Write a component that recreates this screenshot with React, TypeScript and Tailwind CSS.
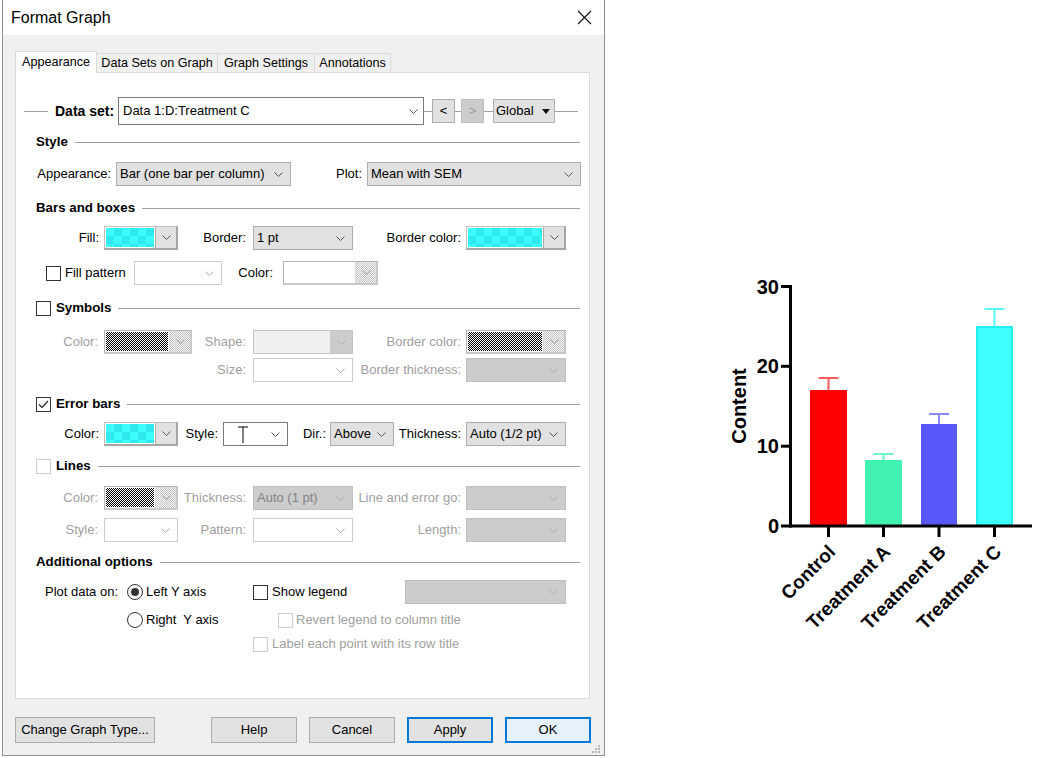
import { ReactNode } from "react";
import clsx from "clsx";

type Variant = "gray" | "white" | "offWhite" | "offGray";

const selectStyles: Record<Variant, string> = {
  gray: "bg-[#e1e1e1] border-[#adadad] text-black",
  white: "bg-white border-[#7a7a7a] text-black",
  offWhite: "bg-white border-[#cccccc] text-[#838383]",
  offGray: "bg-[#cccccc] border-[#bfbfbf] text-[#838383]",
};

const cyanChecker =
  "bg-[conic-gradient(#2ee9ee_25%,#3cfcfc_0_50%,#2ee9ee_0_75%,#3cfcfc_0)] bg-[length:16px_16px]";
const blackDither = "bg-[repeating-conic-gradient(#000_0_25%,#fff_0_50%)] bg-[length:2px_2px]";
const lightDither = "bg-[repeating-conic-gradient(#c4c4c4_0_25%,#f6f6f6_0_50%)] bg-[length:2px_2px]";

function Chevron({ light }: { light?: boolean }) {
  return (
    <svg width="9" height="5" viewBox="0 0 9 5" className="shrink-0">
      <polyline points="0.5,0.5 4.5,4.5 8.5,0.5" fill="none" stroke={light ? "#adadad" : "#555555"} strokeWidth="1" />
    </svg>
  );
}

function Select({ value, variant, className }: { value?: ReactNode; variant: Variant; className: string }) {
  return (
    <div
      className={clsx(
        "flex h-[24px] shrink-0 items-center justify-between overflow-hidden border pl-[3px] pr-[7px] whitespace-nowrap",
        selectStyles[variant],
        className,
      )}
    >
      <span className="overflow-hidden">{value}</span>
      <Chevron light={variant === "offWhite" || variant === "offGray"} />
    </div>
  );
}

function ColorBox({ swatch, disabled, className }: { swatch: "cyan" | "black" | "none"; disabled?: boolean; className: string }) {
  return (
    <div
      className={clsx(
        "flex h-[24px] shrink-0 border",
        disabled ? "border-[#b4b4b4] border-r-2 border-b-2 border-r-[#c8c8c8] border-b-[#c8c8c8]" : "border-[#c0c0c0] border-r-2 border-b-2 border-r-[#a6a6a6] border-b-[#a6a6a6]",
        className,
      )}
    >
      <div
        className={clsx(
          "m-px flex-1",
          swatch === "cyan" && cyanChecker,
          swatch === "black" && blackDither,
          swatch === "none" && "bg-white",
        )}
      />
      <div
        className={clsx(
          "flex w-[21px] items-center justify-center border-l",
          disabled ? clsx(lightDither, "border-[#d8d8d8]") : "border-[#adadad] bg-[#e1e1e1]",
        )}
      >
        <Chevron light={disabled} />
      </div>
    </div>
  );
}

function Check({ checked, disabled }: { checked?: boolean; disabled?: boolean }) {
  return (
    <span
      className={clsx(
        "flex h-[15px] w-[15px] shrink-0 items-center justify-center border bg-white",
        disabled ? "border-[#cccccc]" : "border-[#333333]",
      )}
    >
      {checked && (
        <svg width="11" height="9" viewBox="0 0 11 9">
          <polyline points="1,4.5 4,7.5 10,1" fill="none" stroke="#222222" strokeWidth="1.2" />
        </svg>
      )}
    </span>
  );
}

function Radio({ checked }: { checked?: boolean }) {
  return (
    <span className="flex h-[16px] w-[16px] shrink-0 items-center justify-center rounded-full border-[1.5px] border-[#333333] bg-white">
      {checked && <span className="h-[8px] w-[8px] rounded-full bg-[#333333]" />}
    </span>
  );
}

function Lab({ children, className, off }: { children: ReactNode; className: string; off?: boolean }) {
  return <span className={clsx("shrink-0 text-right whitespace-nowrap", off ? "text-[#a0a0a0]" : "text-black", className)}>{children}</span>;
}

function Section({ title, check, checked, off, className }: { title: string; check?: boolean; checked?: boolean; off?: boolean; className: string }) {
  return (
    <div className={clsx("mr-[9px] ml-[20px] flex h-[16px] items-center", className)}>
      {check && <Check checked={checked} disabled={off} />}
      <span className={clsx("text-[13.3px] font-bold whitespace-nowrap", check && "ml-[5px]")}>{title}</span>
      <div className="ml-[7px] h-px flex-1 bg-[#a0a0a0]" />
    </div>
  );
}

function Row({ children, className }: { children: ReactNode; className: string }) {
  return <div className={clsx("flex h-[24px] items-center", className)}>{children}</div>;
}

function Btn({ children, className }: { children: ReactNode; className: string }) {
  return <div className={clsx("flex h-[26px] shrink-0 items-center justify-center border", className)}>{children}</div>;
}

function Chart() {
  const bars = [
    { name: "Control", x: 810, w: 37, top: 390, err: 378, fill: "#ff0000", stroke: "#ff0000", errColor: "#ff5a5a" },
    { name: "Treatment A", x: 865, w: 37, top: 460, err: 454, fill: "#41f2b0", stroke: "#41f2b0", errColor: "#6ff5c4" },
    { name: "Treatment B", x: 921, w: 36, top: 424, err: 414, fill: "#5858f8", stroke: "#5858f8", errColor: "#8a8afa" },
    { name: "Treatment C", x: 976, w: 37, top: 326, err: 309, fill: "#40ffff", stroke: "#22eeee", errColor: "#5cf8f8" },
  ];
  const yTicks = [
    { v: "30", y: 286.5 },
    { v: "20", y: 366.3 },
    { v: "10", y: 446.2 },
    { v: "0", y: 526 },
  ];
  const font = "Liberation Sans, Arial, sans-serif";
  return (
    <svg width="452" height="758" viewBox="605 0 452 758" className="shrink-0">
      {bars.map((b) => {
        const cx = b.x + b.w / 2;
        return (
          <g key={b.name}>
            <line x1={cx} y1={b.top} x2={cx} y2={b.err} stroke={b.errColor} strokeWidth="2" />
            <line x1={cx - 10} y1={b.err} x2={cx + 10} y2={b.err} stroke={b.errColor} strokeWidth="2" />
            <rect x={b.x + 1} y={b.top + 1} width={b.w - 2} height={525 - b.top - 1} fill={b.fill} stroke={b.stroke} strokeWidth="2" />
            <line x1={cx} y1={526} x2={cx} y2={537} stroke="#000" strokeWidth="3" />
            <text
              transform={`translate(${cx + 8},553) rotate(-45)`}
              textAnchor="end"
              fontFamily={font}
              fontWeight="700"
              fontSize="19"
              fill="#000"
            >
              {b.name}
            </text>
          </g>
        );
      })}
      <line x1="790.5" y1="285" x2="790.5" y2="527.5" stroke="#000" strokeWidth="3" />
      <line x1="789" y1="526" x2="1032" y2="526" stroke="#000" strokeWidth="3" />
      {yTicks.map((t) => (
        <g key={t.v}>
          <line x1="781" y1={t.y} x2="790" y2={t.y} stroke="#000" strokeWidth="3" />
          <text x="779" y={t.y + 7} textAnchor="end" fontFamily={font} fontWeight="700" fontSize="20" fill="#000">
            {t.v}
          </text>
        </g>
      ))}
      <text transform="translate(746,406) rotate(-90)" textAnchor="middle" fontFamily={font} fontWeight="700" fontSize="20" fill="#000">
        Content
      </text>
    </svg>
  );
}

export default function App() {
  return (
    <div className="flex h-[758px] w-[1057px] overflow-hidden bg-white font-['Liberation_Sans',Arial,sans-serif] text-[13px] text-black">
      <div className="ml-[2px] flex h-[756px] w-[603px] shrink-0 flex-col border border-t-0 border-[#8f8f8f] bg-[#f0f0f0]">
        {/* title bar */}
        <div className="flex h-[35px] items-center justify-between bg-white pr-[12px] pl-[8px]">
          <span className="text-[16px]">Format Graph</span>
          <svg width="15" height="15" viewBox="0 0 15 15">
            <line x1="1" y1="1" x2="14" y2="14" stroke="#111" strokeWidth="1.1" />
            <line x1="14" y1="1" x2="1" y2="14" stroke="#111" strokeWidth="1.1" />
          </svg>
        </div>

        {/* tabs */}
        <div className="mt-[16px] ml-[12px] flex h-[21px] items-end text-[12.6px]">
          <div className="relative z-10 -mb-px flex h-[22px] w-[82px] items-center justify-center border border-b-0 border-[#d9d9d9] bg-white">
            Appearance
          </div>
          <div className="flex h-[19px] w-[121px] items-center justify-center border border-b-0 border-l-0 border-[#d9d9d9] bg-[#f0f0f0]">
            Data Sets on Graph
          </div>
          <div className="flex h-[19px] w-[97px] items-center justify-center border border-b-0 border-l-0 border-[#d9d9d9] bg-[#f0f0f0]">
            Graph Settings
          </div>
          <div className="flex h-[19px] w-[76px] items-center justify-center border border-b-0 border-l-0 border-[#d9d9d9] bg-[#f0f0f0]">
            Annotations
          </div>
        </div>

        {/* panel */}
        <div className="ml-[12px] flex h-[627px] w-[575px] flex-col border border-[#d9d9d9] bg-white">
          <div className="mt-[24px] flex h-[28px] items-center">
            <div className="ml-[8px] h-px w-[24px] bg-[#a0a0a0]" />
            <span className="ml-[7px] w-[63px] shrink-0 text-[14px] font-bold">Data set:</span>
            <div className="flex h-[28px] w-[306px] shrink-0 items-center justify-between border border-[#7a7a7a] bg-white pr-[5px] pl-[4px]">
              <span>Data 1:D:Treatment C</span>
              <Chevron />
            </div>
            <div className="h-px w-[8px] bg-[#a0a0a0]" />
            <div className="flex h-[24px] w-[23px] items-center justify-center border border-[#adadad] bg-[#e1e1e1]">&lt;</div>
            <div className="h-px w-[6px] bg-[#a0a0a0]" />
            <div className="flex h-[24px] w-[23px] items-center justify-center border border-[#bfbfbf] bg-[#cccccc] text-[#9a9a9a]">&gt;</div>
            <div className="h-px w-[9px] bg-[#a0a0a0]" />
            <div className="flex h-[24px] w-[62px] items-center gap-[8px] border border-[#adadad] bg-[#e1e1e1] pl-[2px]">
              <span>Global</span>
              <svg width="8" height="5" viewBox="0 0 8 5">
                <polygon points="0,0 8,0 4,5" fill="#111" />
              </svg>
            </div>
            <div className="mr-[11px] h-px flex-1 bg-[#a0a0a0]" />
          </div>

          <Section title="Style" className="mt-[9px]" />
          <Row className="mt-[12px]">
            <Lab className="w-[95px]">Appearance:</Lab>
            <Select variant="gray" value="Bar (one bar per column)" className="ml-[5px] w-[175px]" />
            <Lab className="w-[71px]">Plot:</Lab>
            <Select variant="gray" value="Mean with SEM" className="ml-[5px] w-[214px]" />
          </Row>

          <Section title="Bars and boxes" className="mt-[14px]" />
          <Row className="mt-[10px]">
            <Lab className="w-[83px]">Fill:</Lab>
            <ColorBox swatch="cyan" className="ml-[5px] w-[74px]" />
            <Lab className="w-[68px]">Border:</Lab>
            <Select variant="gray" value="1 pt" className="ml-[7px] w-[100px]" />
            <Lab className="w-[108px]">Border color:</Lab>
            <ColorBox swatch="cyan" className="ml-[5px] w-[100px]" />
          </Row>
          <Row className="mt-[11px]">
            <span className="ml-[30px]">
              <Check />
            </span>
            <span className="ml-[4px] w-[69px] shrink-0">Fill pattern</span>
            <Select variant="offWhite" className="w-[88px]" />
            <Lab className="w-[51px]">Color:</Lab>
            <ColorBox swatch="none" disabled className="ml-[10px] w-[95px]" />
          </Row>

          <Section title="Symbols" check className="mt-[15px]" />
          <Row className="mt-[14px]">
            <Lab off className="w-[82px]">Color:</Lab>
            <ColorBox swatch="black" disabled className="ml-[6px] w-[88px]" />
            <Lab off className="w-[54px]">Shape:</Lab>
            <div className="ml-[7px] flex h-[24px] w-[100px] shrink-0 border border-[#c4c4c4] bg-[#f0f0f0]">
              <div className="flex-1" />
              <div className="flex w-[22px] items-center justify-center bg-[#cccccc]">
                <Chevron light />
              </div>
            </div>
            <Lab off className="w-[108px]">Border color:</Lab>
            <ColorBox swatch="black" disabled className="ml-[5px] w-[100px]" />
          </Row>
          <Row className="mt-[4px]">
            <Lab off className="w-[230px]">Size:</Lab>
            <Select variant="offWhite" className="ml-[7px] w-[100px]" />
            <Lab off className="w-[108px]">Border thickness:</Lab>
            <Select variant="offGray" className="ml-[5px] w-[100px]" />
          </Row>

          <Section title="Error bars" check checked className="mt-[14px]" />
          <Row className="mt-[10px]">
            <Lab className="w-[83px]">Color:</Lab>
            <ColorBox swatch="cyan" className="ml-[5px] w-[74px]" />
            <Lab className="w-[40px]">Style:</Lab>
            <div className="ml-[5px] flex h-[24px] w-[65px] shrink-0 items-center justify-between border border-[#7a7a7a] bg-white pr-[7px] pl-[14px]">
              <svg width="10" height="17" viewBox="0 0 10 17">
                <line x1="0" y1="1" x2="10" y2="1" stroke="#000" strokeWidth="1" />
                <line x1="5" y1="1" x2="5" y2="17" stroke="#000" strokeWidth="1" />
              </svg>
              <Chevron />
            </div>
            <Lab className="w-[38px]">Dir.:</Lab>
            <Select variant="gray" value="Above" className="ml-[4px] w-[64px]" />
            <Lab className="w-[67px]">Thickness:</Lab>
            <Select variant="gray" value="Auto (1/2 pt)" className="ml-[5px] w-[100px]" />
          </Row>

          <Section title="Lines" check off className="mt-[12px]" />
          <Row className="mt-[12px]">
            <Lab off className="w-[82px]">Color:</Lab>
            <ColorBox swatch="black" disabled className="ml-[6px] w-[74px]" />
            <Lab off className="w-[68px]">Thickness:</Lab>
            <Select variant="offGray" value="Auto (1 pt)" className="ml-[7px] w-[100px]" />
            <Lab off className="w-[108px]">Line and error go:</Lab>
            <Select variant="offGray" className="ml-[5px] w-[100px]" />
          </Row>
          <Row className="mt-[8px]">
            <Lab off className="w-[82px]">Style:</Lab>
            <Select variant="offWhite" className="ml-[6px] w-[74px]" />
            <Lab off className="w-[68px]">Pattern:</Lab>
            <Select variant="offWhite" className="ml-[7px] w-[100px]" />
            <Lab off className="w-[108px]">Length:</Lab>
            <Select variant="offGray" className="ml-[5px] w-[100px]" />
          </Row>

          <Section title="Additional options" className="mt-[12px]" />
          <Row className="mt-[10px]">
            <span className="ml-[29px] w-[82px] shrink-0">Plot data on:</span>
            <Radio checked />
            <span className="ml-[3px] w-[107px] shrink-0">Left Y axis</span>
            <Check />
            <span className="ml-[4px] w-[133px] shrink-0">Show legend</span>
            <Select variant="offGray" className="w-[161px]" />
          </Row>
          <div className="mt-[8px] flex h-[16px] items-center">
            <span className="ml-[111px]">
              <Radio />
            </span>
            <span className="ml-[3px] w-[132px] shrink-0 whitespace-pre">Right  Y axis</span>
            <Check disabled />
            <span className="ml-[3px] text-[#a0a0a0]">Revert legend to column title</span>
          </div>
          <div className="mt-[8px] flex h-[16px] items-center">
            <span className="ml-[237px]">
              <Check disabled />
            </span>
            <span className="ml-[4px] text-[#a0a0a0]">Label each point with its row title</span>
          </div>
        </div>

        {/* footer */}
        <div className="mt-[18px] flex items-center">
          <Btn className="ml-[12px] w-[140px] border-[#adadad] bg-[#e1e1e1]">Change Graph Type...</Btn>
          <Btn className="ml-[56px] w-[86px] border-[#adadad] bg-[#e1e1e1]">Help</Btn>
          <Btn className="ml-[12px] w-[86px] border-[#adadad] bg-[#e1e1e1]">Cancel</Btn>
          <Btn className="ml-[12px] w-[86px] border-2 border-[#0078d7] bg-[#e1e1e1]">Apply</Btn>
          <Btn className="ml-[12px] w-[86px] border-2 border-[#0078d7] bg-[#e5f1fb]">OK</Btn>
        </div>
        <div className="mt-[1px] mr-[3px] flex justify-end">
          <svg width="10" height="10" viewBox="0 0 10 10">
            <rect x="7" y="1" width="2" height="2" fill="#b8b8b8" />
            <rect x="4" y="4" width="2" height="2" fill="#b8b8b8" />
            <rect x="7" y="4" width="2" height="2" fill="#b8b8b8" />
            <rect x="1" y="7" width="2" height="2" fill="#b8b8b8" />
            <rect x="4" y="7" width="2" height="2" fill="#b8b8b8" />
            <rect x="7" y="7" width="2" height="2" fill="#b8b8b8" />
          </svg>
        </div>
      </div>
      <Chart />
    </div>
  );
}
